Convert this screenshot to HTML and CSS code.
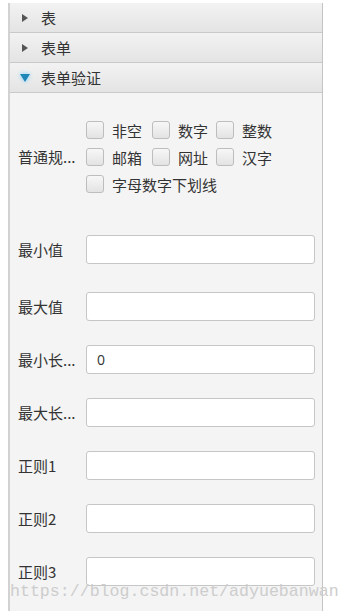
FILE: index.html
```html
<!DOCTYPE html>
<html lang="zh">
<head>
<meta charset="utf-8">
<link rel="stylesheet" href="styles.css">
</head>
<body>
<div class="page">
  <div class="accordion">
    <div class="pane-title"><span class="arrow arrow-right"></span><span class="title-text">表</span></div>
    <div class="pane-title"><span class="arrow arrow-right"></span><span class="title-text">表单</span></div>
    <div class="pane-title"><span class="arrow arrow-down"></span><span class="title-text">表单验证</span></div>
    <div class="pane-content">
      <div class="check-row">
        <div class="label">普通规...</div>
        <div class="check-grid">
          <label class="check"><span class="box"></span><span>非空</span></label>
          <label class="check"><span class="box"></span><span>数字</span></label>
          <label class="check"><span class="box"></span><span>整数</span></label>
          <label class="check"><span class="box"></span><span>邮箱</span></label>
          <label class="check"><span class="box"></span><span>网址</span></label>
          <label class="check"><span class="box"></span><span>汉字</span></label>
          <label class="check wide"><span class="box"></span><span>字母数字下划线</span></label>
        </div>
      </div>
      <div class="fields">
        <div class="field first"><div class="label">最小值</div><div class="input"></div></div>
        <div class="field second"><div class="label">最大值</div><div class="input"></div></div>
        <div class="field"><div class="label">最小长...</div><div class="input">0</div></div>
        <div class="field"><div class="label">最大长...</div><div class="input"></div></div>
        <div class="field"><div class="label">正则1</div><div class="input"></div></div>
        <div class="field"><div class="label">正则2</div><div class="input"></div></div>
        <div class="field"><div class="label">正则3</div><div class="input"></div></div>
      </div>
    </div>
  </div>
  <div class="watermark">https://blog.csdn.net/adyuebanwan</div>
</div>
</body>
</html>
```
FILE: styles.css
```css
html, body {
  margin: 0;
  padding: 0;
  background: #ffffff;
}
body {
  font-family: "Noto Sans CJK SC", "Noto Sans", sans-serif;
  font-size: 15px;
  color: #333333;
  width: 351px;
  height: 611px;
  overflow: hidden;
}
.page {
  position: relative;
  height: 611px;
  padding-top: 3px;
  box-sizing: border-box;
}
.accordion {
  margin-left: 8px;
  width: 315px;
  height: 608px;
  border-left: 2px solid #d2d2d2;
  border-right: 1px solid #c4c4c4;
  box-sizing: border-box;
  background: #f4f4f4;
  display: flex;
  flex-direction: column;
}
.pane-title {
  height: 29px;
  border-bottom: 1px solid #c9c9c9;
  background: linear-gradient(#f2f2f2, #e4e4e4);
  display: flex;
  align-items: center;
  flex-shrink: 0;
}
.arrow {
  width: 20px;
  margin-left: 10px;
  display: flex;
  align-items: center;
  justify-content: flex-start;
}
.arrow-right::before {
  content: "";
  display: block;
  margin-left: 2px;
  border-left: 6px solid #555555;
  border-top: 4px solid transparent;
  border-bottom: 4px solid transparent;
}
.arrow-down::before {
  content: "";
  display: block;
  border-top: 8px solid #1f86b8;
  border-left: 5px solid transparent;
  border-right: 5px solid transparent;
  filter: drop-shadow(0 0 2px #6fd0ff);
}
.title-text {
  margin-left: 1px;
  line-height: 20px;
  color: #333333;
}
.pane-content {
  padding: 28px 0 0 8px;
  flex: 1;
}
.check-row {
  display: flex;
  align-items: center;
}
.label {
  width: 68px;
  flex-shrink: 0;
  white-space: nowrap;
  line-height: 20px;
}
.check-grid {
  display: grid;
  grid-template-columns: 66px 64px auto;
  row-gap: 9px;
}
.check {
  display: flex;
  align-items: center;
  height: 18px;
  white-space: nowrap;
}
.check.wide {
  grid-column: 1 / span 3;
}
.box {
  width: 16px;
  height: 16px;
  border: 1px solid #bdbdbd;
  border-radius: 3px;
  background: linear-gradient(#f7f7f7, #e3e3e3);
  margin-right: 8px;
  flex-shrink: 0;
}
.fields {
  margin-top: 42px;
  display: flex;
  flex-direction: column;
  row-gap: 24px;
}
.field {
  display: flex;
  align-items: center;
  height: 29px;
}
.field.second {
  margin-top: 4px;
}
.input {
  width: 229px;
  height: 29px;
  box-sizing: border-box;
  background: #ffffff;
  border: 1px solid #c6c6c6;
  border-radius: 3px;
  padding-left: 10px;
  line-height: 27px;
  color: #333333;
  font-family: "Open Sans", "Noto Sans", sans-serif;
  font-size: 14px;
}
.watermark {
  position: absolute;
  left: 10px;
  top: 584px;
  line-height: 16px;
  font-family: "Liberation Mono", monospace;
  font-size: 16.6px;
  color: #cdcdcd;
  white-space: nowrap;
  pointer-events: none;
}
```
